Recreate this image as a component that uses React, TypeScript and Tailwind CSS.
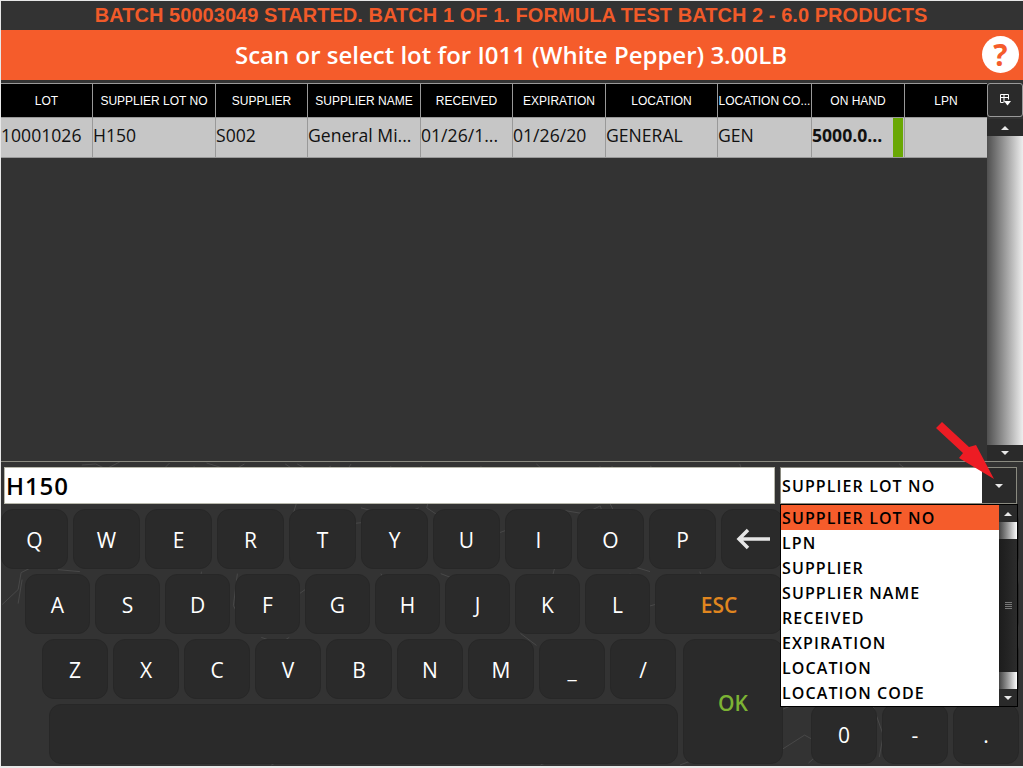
const columns = [
  { title: 'LOT', value: '10001026', w: 'w-[92px]' },
  { title: 'SUPPLIER LOT NO', value: 'H150', w: 'w-[123px]' },
  { title: 'SUPPLIER', value: 'S002', w: 'w-[92px]' },
  { title: 'SUPPLIER NAME', value: 'General Mi...', w: 'w-[113px]' },
  { title: 'RECEIVED', value: '01/26/1...', w: 'w-[92px]' },
  { title: 'EXPIRATION', value: '01/26/20', w: 'w-[93px]' },
  { title: 'LOCATION', value: 'GENERAL', w: 'w-[112px]' },
  { title: 'LOCATION CO...', value: 'GEN', w: 'w-[94px]' },
];

const options = ['SUPPLIER LOT NO', 'LPN', 'SUPPLIER', 'SUPPLIER NAME', 'RECEIVED', 'EXPIRATION', 'LOCATION', 'LOCATION CODE'];

function Key({ label, className = 'text-white' }: { label?: string; className?: string }) {
  return (
    <div className={`flex h-[60px] shrink-0 items-center justify-center rounded-[12px] border border-[#272727] bg-[#2a2a2a] pt-[4px] text-[21px] ${className}`}>
      {label}
    </div>
  );
}

function Caret({ className = '' }: { className?: string }) {
  return <div className={`h-0 w-0 border-x-[4px] border-b-[4px] border-x-transparent border-b-[#e8e8e8] ${className}`} />;
}

function Cracks() {
  return (
    <svg className="absolute inset-0 h-full w-full" viewBox="0 0 1023 306" fill="none" stroke="#484848" strokeWidth="1">
      <path d="M0 143l16-15 3-17 12-6M20 118l-4 24M56 108l22 2" />
      <path d="M80 3l14-1 10 5 14-7M128 5l6 18M168 1l-9 9 24 6 10-12M205 1l26 8 12-7M240 8l-10 24 24 8 6-6" />
      <path d="M284 2l12 8 2 22-6 20 12 14 20-14 26 10 18-2M296 2l20 10 14-8M350 2l-14 22 12 12M390 4l-8 26" />
      <path d="M236 112l-4 32 10 20 22 4M260 176l18 6 10-6M200 110l-6 36M304 128l-14 10-4 16" />
      <path d="M420 4l12 16-6 26 18 12 14-10 12 18 26 6 22-8M480 4l10 14 16-12M536 2l22 20 14-8M600 4l-10 28" />
      <path d="M360 46l22 6 16 2 20-8M440 112l26 10 12-6 20 10M380 112l12 22M556 100l-8 30" />
      <path d="M612 4l-6 30 12 24-8 22 14 22 26 8M650 4l22 16 18-8M700 6l18 10M740 2l10 30" />
      <path d="M560 48l24 4 16-8 6 18M630 112l-6 24 20 10 22-6M520 172l16 12M700 110l8 30" />
      <path d="M783 248l22-9 26 10M783 288l22-14 22 12-18 16" />
      <path d="M806 200l8 30M872 240l12 34-4 22M780 8l12 8 22-6 28 10 26-6 40 10M900 2l18 14 30-8 22 6" />
      <path d="M180 302l16-8 24 6M270 304l12-6M540 304l20-8 24 4M680 304l16-6" />
    </svg>
  );
}

export default function App() {
  return (
    <div className="relative h-[768px] w-[1023px] overflow-hidden border-t border-b-2 border-l border-[#e8e8e8] bg-[#333333] font-['Open_Sans',sans-serif]">
      {/* batch banner */}
      <div className="flex h-[29px] items-center justify-center pr-[2px] pb-[2px] font-['Liberation_Sans',sans-serif] text-[20px] font-bold tracking-[0.05px] text-[#f15a29]">
        BATCH 50003049 STARTED. BATCH 1 OF 1. FORMULA TEST BATCH 2 - 6.0 PRODUCTS
      </div>

      <div className="relative flex h-[50px] items-center justify-center bg-[#f55c2b] pr-[2px] text-[24px] font-semibold text-white">
        <span>Scan or select lot for I011 (White Pepper) 3.00LB</span>
        <div className="absolute top-[6px] right-[4px] flex h-[37px] w-[37px] items-center justify-center rounded-full bg-white text-[30px] font-bold text-[#f55c2b]">?</div>
      </div>

      {/* lot grid */}
      <div className="flex h-[381px] pt-[3px]">
        <div className="w-[986px] shrink-0">
          <div className="flex h-[34px] border-t border-[#999999] bg-black font-['Liberation_Sans',sans-serif] text-[12px] text-white">
            {columns.map(c => (
              <div key={c.title} className={`${c.w} flex shrink-0 items-center justify-center overflow-hidden border-r border-[#999999] whitespace-nowrap`}>
                {c.title}
              </div>
            ))}
            <div className="flex w-[93px] shrink-0 items-center justify-center border-r border-[#999999]">ON HAND</div>
            <div className="flex w-[82px] shrink-0 items-center justify-center">LPN</div>
          </div>
          <div className="flex h-[41px] border-y border-[#999999] bg-[#c6c6c6] text-[17.6px] text-[#111111]">
            {columns.map(c => (
              <div key={c.title} className={`${c.w} flex shrink-0 items-center overflow-hidden border-r border-[#999999] pb-[4px] whitespace-nowrap`}>
                {c.value}
              </div>
            ))}
            <div className="flex w-[93px] shrink-0 items-center justify-between border-r border-[#999999]">
              <span className="pb-[4px] font-bold">5000.0...</span>
              <div className="mr-[1px] h-full w-[10px] bg-[#6aa805]" />
            </div>
            <div className="w-[82px] shrink-0" />
          </div>
        </div>
        <div className="flex flex-1 flex-col">
          <div className="flex h-[34px] items-center justify-center rounded-[3px] border border-[#999999] bg-[#2a2a2a]">
            <svg width="12" height="14" viewBox="0 0 12 14" fill="none" stroke="#ffffff" strokeWidth="1">
              <path d="M1.5 1.5h8v5M1.5 1.5v8h3M1.5 4.5h8M5 1.5v8" />
              <path d="M5 8h7l-3.5 4.5z" fill="#ffffff" stroke="none" />
            </svg>
          </div>
          <div className="mt-[2px] flex h-[17px] items-center justify-center bg-[#2a2a2a]"><Caret /></div>
          <div className="flex-1 bg-gradient-to-r from-[#505050] to-[#eeeeee]" />
          <div className="flex h-[16px] items-center justify-center bg-[#2a2a2a]"><Caret className="rotate-180" /></div>
        </div>
      </div>

      {/* keyboard panel */}
      <div className="relative h-[306px] border-t border-[#8a8a80]">
        <Cracks />
        <div className="relative flex h-[47px] items-start gap-[5px] pt-[5px] pl-[3px]">
          <div className="flex h-[37px] w-[771px] items-center border border-[#b8b8ac] bg-white pl-[1px] text-[24px] font-semibold tracking-[0.9px] text-black">H150</div>
          <div className="flex h-[37px] w-[237px] border border-[#8a8a80] bg-[#2a2a2a]">
            <div className="flex w-[201px] items-center bg-white pl-[1px] text-[16px] font-semibold tracking-[1.1px] text-black">SUPPLIER LOT NO</div>
            <div className="flex flex-1 items-center justify-center"><Caret className="rotate-180" /></div>
          </div>
        </div>

        <div className="relative flex gap-[28px]">
          <div className="flex w-[782px] shrink-0 flex-col gap-[5px]">
            <div className="flex gap-[5px]">
              {'QWERTYUIOP'.split('').map(k => <Key key={k} label={k} className="w-[67px] text-white" />)}
              <Key className="w-[62px]" label="" />
            </div>
            <div className="flex gap-[5px] pl-[24px]">
              {'ASDFGHJKL'.split('').map(k => <Key key={k} label={k} className="w-[65px] text-white" />)}
              <Key label="ESC" className="w-[128px] font-semibold text-[#e0861f]" />
            </div>
            <div className="flex gap-[5px]">
              <div className="flex w-[677px] shrink-0 flex-col items-end gap-[5px]">
                <div className="flex gap-[5px] pr-[2px]">
                  {['Z', 'X', 'C', 'V', 'B', 'N', 'M', '_', '/'].map(k => <Key key={k} label={k} className="w-[66px] text-white" />)}
                </div>
                <Key className="w-[629px]" />
              </div>
              <Key label="OK" className="h-[125px] w-[100px] font-semibold text-[#7cb334]" />
            </div>
          </div>
          <div className="grid w-[208px] shrink-0 grid-cols-3 gap-[5px]">
            {['', '', '', '', '', '', '', '', '', '0', '-', '.'].map((k, i) => <Key key={i} label={k} className="w-[66px] text-white" />)}
          </div>
        </div>

        {/* open dropdown list */}
        <div className="absolute top-[42px] left-[779px] flex h-[203px] w-[238px] border border-black bg-white text-[16px] font-semibold tracking-[1.1px] text-black">
          <div className="w-[218px] shrink-0">
            {options.map((o, i) => (
              <div key={o} className={`flex h-[25px] items-center pl-[1px] ${i === 0 ? 'bg-[#f55c2b]' : ''}`}>{o}</div>
            ))}
          </div>
          <div className="flex flex-1 flex-col bg-gradient-to-r from-[#1c1c1c] to-[#2c2c2c]">
            <div className="flex h-[17px] items-center justify-center bg-[#2a2a2a]"><Caret /></div>
            <div className="h-[17px] bg-gradient-to-r from-[#444444] to-[#ffffff]" />
            <div className="flex flex-1 flex-col items-center justify-center gap-[1px]">
              <div className="h-[1px] w-[7px] bg-[#777777]" />
              <div className="h-[1px] w-[7px] bg-[#777777]" />
              <div className="h-[1px] w-[7px] bg-[#777777]" />
              <div className="h-[1px] w-[7px] bg-[#777777]" />
            </div>
            <div className="h-[17px] bg-gradient-to-r from-[#444444] to-[#ffffff]" />
            <div className="flex h-[17px] items-center justify-center bg-[#2a2a2a]"><Caret className="rotate-180" /></div>
          </div>
        </div>

        {/* backspace arrow */}
        <svg className="absolute top-[66px] left-[735px]" width="34" height="24" viewBox="0 0 34 24" fill="none" stroke="#e6e6e6" strokeWidth="3.5">
          <path d="M34 11H4M12 2l-9 9 9 9" />
        </svg>
      </div>

      {/* red callout arrow */}
      <svg className="absolute top-[-1px] left-[-1px]" width="1023" height="768" viewBox="0 0 1023 768" fill="#ed1c24">
        <path d="M936 428l6-6 27 25 7-2 18 34-35-21 4-5z" />
      </svg>
    </div>
  );
}
